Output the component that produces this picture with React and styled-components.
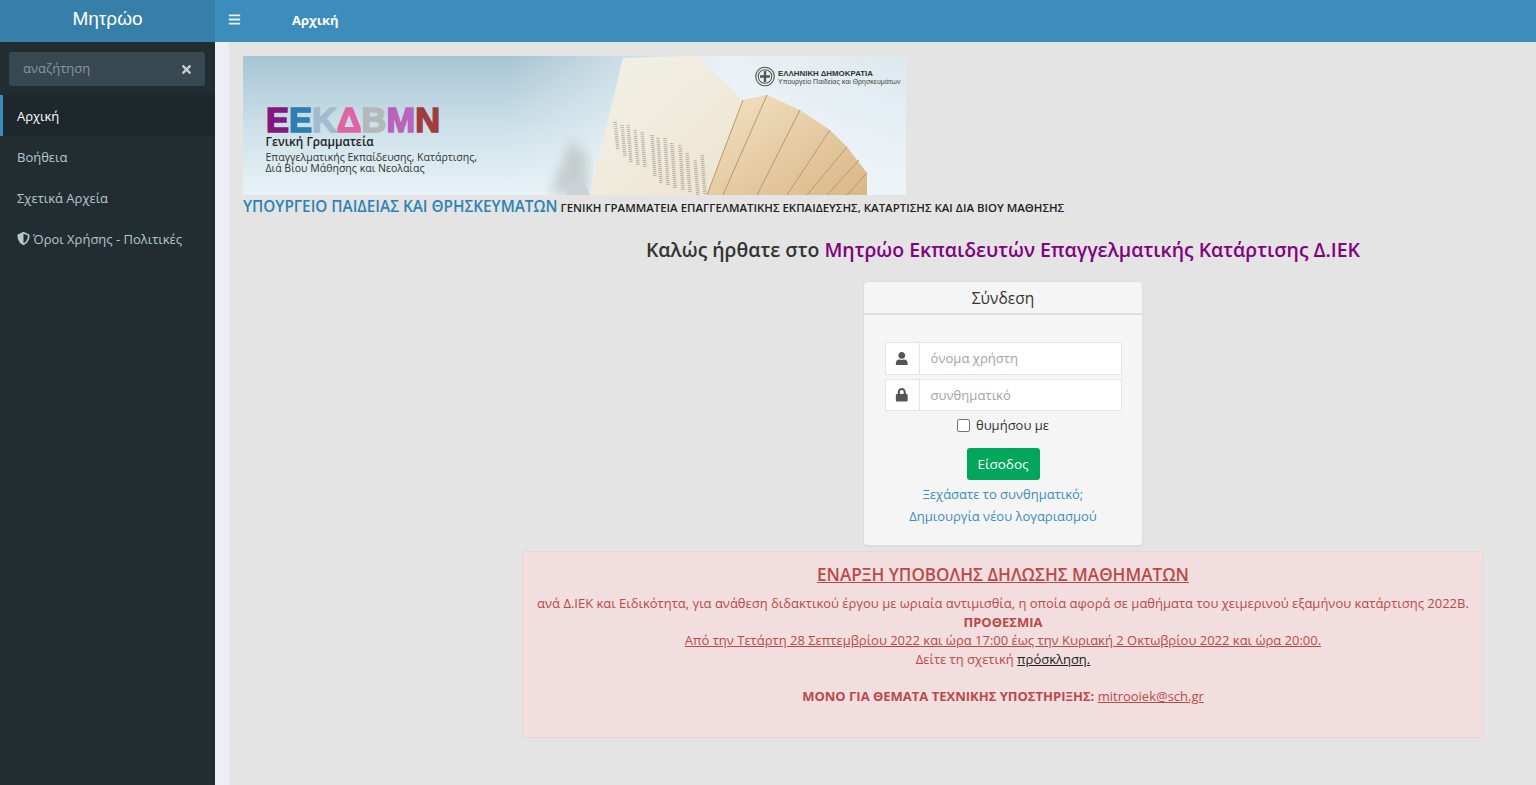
import React from 'react';
import styled, {createGlobalStyle} from 'styled-components';
import {FaBars, FaUser, FaLock, FaTimes, FaShieldAlt} from 'react-icons/fa';

const GlobalStyle = createGlobalStyle`
  html, body {
    margin: 0;
    height: 100%;
    overflow: hidden;
  }
  body {
    background: #e4e4e4;
    color: #333;
    font-family: "Open Sans", "Noto Sans", sans-serif;
    font-size: 14px;
  }
  * {
    box-sizing: border-box;
  }
`;

const Page = styled.div`
  display: flex;
  width: 1536px;
  height: 785px;
  overflow: hidden;
`;

const Sidebar = styled.aside`
  flex: 0 0 215px;
  display: flex;
  flex-direction: column;
  background: #222d32;
`;
const Brand = styled.div`
  height: 42px;
  display: flex;
  justify-content: center;
  align-items: center;
  padding-bottom: 4px;
  background: #367fa9;
  color: #fff;
  font-family: "Liberation Sans", Arial, sans-serif;
  font-size: 19px;
`;
const SearchWrap = styled.div`
  height: 53px;
  padding: 10px 10px 9px 9px;
`;
const SearchBox = styled.div`
  height: 34px;
  display: flex;
  justify-content: space-between;
  align-items: center;
  padding: 0 12px 2px 14px;
  border-radius: 3px;
  background: #374850;
  color: #87969d;
  font-size: 13px;
  & svg {
    color: #c4cdd1;
    font-size: 13px;
    margin-top: 2px;
  }
`;
const MenuItem = styled.div`
  height: 41px;
  display: flex;
  align-items: center;
  gap: 3px;
  padding-left: ${props => props.active ? 14 : 17}px;
  border-left: ${props => props.active ? '3px solid #3c8dbc' : 'none'};
  background: ${props => props.active ? '#1e282c' : 'transparent'};
  color: ${props => props.active ? '#fff' : '#b8c7ce'};
  font-size: 13px;
  & svg {
    font-size: 13px;
  }
`;

const Main = styled.div`
  flex: 1;
  display: flex;
  flex-direction: column;
  min-width: 0;
`;
const Navbar = styled.header`
  height: 42px;
  flex: 0 0 42px;
  display: flex;
  align-items: center;
  padding-left: 13px;
  background: #3c8dbc;
  color: #fff;
  & svg {
    font-size: 13px;
    margin-bottom: 3px;
    color: #e8f1f6;
  }
`;
const NavTitle = styled.div`
  margin-left: 51px;
  margin-bottom: 3px;
  font-size: 13px;
  font-weight: 700;
`;
const Content = styled.main`
  flex: 1;
  padding: 14px 52px 0 14px;
  border-left: 14px solid #ecf0f5;
  background: #e4e4e4;
`;

const Banner = styled.svg`
  display: block;
  width: 663px;
  height: 139px;
`;
const TitleLine = styled.div`
  height: 22px;
  padding-top: 1px;
  display: flex;
  align-items: baseline;
  gap: 3px;
  white-space: nowrap;
`;
const Ministry = styled.span`
  color: #2c83b5;
  font-size: 15.3px;
  font-weight: 600;
`;
const Secretariat = styled.span`
  color: #222;
  font-size: 11.45px;
  font-weight: 600;
`;
const Column = styled.div`
  margin-left: 279px;
  display: flex;
  flex-direction: column;
  align-items: center;
`;
const Welcome = styled.h3`
  margin: 20px 0 19px;
  color: #333;
  font-size: 19.45px;
  line-height: 25px;
  font-weight: 600;
  white-space: nowrap;
  & span {
    color: #800080;
  }
`;
const Panel = styled.section`
  width: 280px;
  height: 265px;
  margin-bottom: 5px;
  border: 1px solid #ddd;
  border-radius: 4px;
  background: #f5f5f5;
  box-shadow: 0 1px 1px rgba(0,0,0,.05);
`;
const PanelHead = styled.div`
  height: 33px;
  display: flex;
  justify-content: center;
  align-items: center;
  border-bottom: 2px solid #ddd;
  color: #333;
  font-size: 15.5px;
`;
const PanelBody = styled.div`
  display: flex;
  flex-direction: column;
  align-items: center;
  padding: 27px 20px 0;
`;
const InputRow = styled.div`
  width: 237px;
  height: ${props => props.second ? 32 : 33}px;
  margin-bottom: ${props => props.second ? 0 : 4}px;
  display: flex;
  border: 1px solid #e2e5ea;
  background: #fff;
`;
const Addon = styled.div`
  flex: 0 0 34px;
  display: flex;
  justify-content: center;
  align-items: center;
  border-right: 1px solid #e2e5ea;
  color: #555;
  font-size: 13.5px;
`;
const Placeholder = styled.div`
  flex: 1;
  display: flex;
  align-items: center;
  padding-left: 11px;
  padding-bottom: 1px;
  color: #a3a3a3;
  font-size: 13.1px;
`;
const RememberRow = styled.label`
  height: 28px;
  display: flex;
  align-items: center;
  gap: 6px;
  color: #333;
  font-size: 13px;
`;
const CheckBox = styled.span`
  width: 13px;
  height: 13px;
  border: 1.5px solid #767676;
  border-radius: 2px;
  background: #fff;
`;
const LoginButton = styled.div`
  width: 73px;
  height: 32px;
  margin: 9px 0 3px;
  display: flex;
  justify-content: center;
  align-items: center;
  border-radius: 3px;
  background: #00a65a;
  color: #fff;
  font-size: 13.5px;
`;
const PanelLink = styled.a`
  height: 22px;
  display: flex;
  align-items: center;
  color: #3c8dbc;
  font-size: 13px;
  white-space: nowrap;
`;

const Alert = styled.section`
  width: 962px;
  height: 187px;
  padding: 11px 0 0;
  border: 1px solid #eed3d6;
  border-radius: 3px;
  background: #f2dede;
  color: #b94a48;
  text-align: center;
  font-size: 13px;
  line-height: 18.6px;
`;
const AlertTitle = styled.h4`
  margin: 0 0 7px;
  font-size: 17.1px;
  line-height: 24px;
  font-weight: 600;
  text-decoration: underline;
`;
const AlertLine = styled.div`
  min-height: 18.6px;
  white-space: nowrap;
  font-weight: ${props => props.bold ? 700 : 400};
  text-decoration: ${props => props.under ? 'underline' : 'none'};
`;
const DarkLink = styled.a`
  color: #222;
  text-decoration: underline;
`;
const MailLink = styled.a`
  color: #b94a48;
  font-weight: 400;
  text-decoration: underline;
`;

const logoLetters = [
    ['Ε', '#84177f'], ['Ε', '#2c7fb0'], ['Κ', '#a3bccd'], ['Δ', '#df64a3'],
    ['Β', '#b4b8bb'], ['Μ', '#b963bd'], ['Ν', '#a13c3e'],
];
const printColumns = [
    [372, 66, 94], [379, 69, 101], [385, 69, 107], [392, 74, 109], [399, 76, 111], [409, 79, 121], [415, 82, 127],
    [422, 82, 129], [429, 87, 132], [437, 89, 134], [444, 97, 137], [452, 104, 139], [459, 99, 139],
];
const pageFolds = [
    [464, 139, 500, 44], [480, 139, 524, 39], [514, 139, 557, 54], [544, 139, 587, 74],
    [564, 139, 604, 91], [584, 139, 616, 104], [604, 139, 624, 117],
];

const BannerPicture = () => (
    <Banner viewBox="0 0 663 139">
        <defs>
            <linearGradient id="sky" x1="0" y1="0" x2="0" y2="1">
                <stop offset="0" stopColor="#a7c5d3"/>
                <stop offset="0.55" stopColor="#cfe2ea"/>
                <stop offset="1" stopColor="#e8f3f7"/>
            </linearGradient>
            <linearGradient id="skyFade" x1="0" y1="0" x2="1" y2="0">
                <stop offset="0.4" stopColor="#f1f6f9" stopOpacity="0"/>
                <stop offset="0.72" stopColor="#f1f6f9" stopOpacity="0.9"/>
                <stop offset="1" stopColor="#eef4f8" stopOpacity="0.75"/>
            </linearGradient>
            <linearGradient id="paper" x1="0" y1="0" x2="1" y2="1">
                <stop offset="0" stopColor="#f1f1e8"/>
                <stop offset="1" stopColor="#eee4cf"/>
            </linearGradient>
            <linearGradient id="fan" x1="0" y1="0" x2="1" y2="1">
                <stop offset="0" stopColor="#f3e2c4"/>
                <stop offset="1" stopColor="#d9b786"/>
            </linearGradient>
            <filter id="soft"><feGaussianBlur stdDeviation="0.5"/></filter>
            <filter id="streak"><feGaussianBlur stdDeviation="6"/></filter>
        </defs>
        <rect width="663" height="139" fill="url(#sky)"/>
        <rect width="663" height="139" fill="url(#skyFade)"/>
        <polygon points="306,139 328,84 344,100 346,139" fill="#8d9089" opacity="0.35" filter="url(#streak)"/>
        <g filter="url(#soft)">
            <polygon points="380,2 454,0 500,44 464,139 347,139" fill="url(#paper)"/>
            <polygon points="500,44 524,39 557,54 587,74 604,91 624,117 624,139 464,139" fill="url(#fan)"/>
            <polygon points="337,118 347,139 322,139" fill="#c9d3d6"/>
            {pageFolds.map(([x1, y1, x2, y2]) => (
                <line key={x2} x1={x1} y1={y1} x2={x2} y2={y2} stroke="#b8976a" strokeWidth="1"/>
            ))}
            {printColumns.map(([x, y1, y2]) => (
                <line key={x} x1={x} y1={y1} x2={x + 3} y2={y2} stroke="#77746d" strokeWidth="3.5"
                      strokeDasharray="0.7 1.3" opacity="0.65"/>
            ))}
        </g>
        <text x="23" y="75.5" fontFamily="'Liberation Sans', sans-serif" fontSize="35" fontWeight="700"
              textLength="174" lengthAdjust="spacingAndGlyphs">
            {logoLetters.map(([letter, colour], i) => (
                <tspan key={i} fill={colour} stroke={colour} strokeWidth="1.6">{letter}</tspan>
            ))}
        </text>
        <text x="22.5" y="90" fontFamily="'Open Sans', sans-serif" fontSize="11.8" fontWeight="600" fill="#222">Γενική Γραμματεία</text>
        <text x="22.5" y="105" fontFamily="'Open Sans', sans-serif" fontSize="10.55" fill="#333">Επαγγελματικής Εκπαίδευσης, Κατάρτισης,</text>
        <text x="22.5" y="116" fontFamily="'Open Sans', sans-serif" fontSize="10.55" fill="#333">Διά Βίου Μάθησης και Νεολαίας</text>
        <g fill="none" stroke="#555" strokeWidth="1.1">
            <circle cx="522" cy="20.5" r="9.3"/>
            <circle cx="522" cy="20.5" r="6.8"/>
            <path d="M522 15v11M517 20.5h10" strokeWidth="2.4"/>
        </g>
        <text x="535" y="19.5" fontFamily="'Liberation Sans', sans-serif" fontSize="7.9" fontWeight="700" fill="#333">ΕΛΛΗΝΙΚΗ ΔΗΜΟΚΡΑΤΙΑ</text>
        <text x="535" y="28" fontFamily="'Liberation Sans', sans-serif" fontSize="7" fill="#444">Υπουργείο Παιδείας και Θρησκευμάτων</text>
    </Banner>
);

const App = () => {
    return (
        <Page>
            <GlobalStyle/>
            <Sidebar>
                <Brand>Μητρώο</Brand>
                <SearchWrap>
                    <SearchBox>αναζήτηση<FaTimes/></SearchBox>
                </SearchWrap>
                <MenuItem active>Αρχική</MenuItem>
                <MenuItem>Βοήθεια</MenuItem>
                <MenuItem>Σχετικά Αρχεία</MenuItem>
                <MenuItem><FaShieldAlt/>Όροι Χρήσης - Πολιτικές</MenuItem>
            </Sidebar>
            <Main>
                <Navbar>
                    <FaBars/>
                    <NavTitle>Αρχική</NavTitle>
                </Navbar>
                <Content>
                    <BannerPicture/>
                    <TitleLine>
                        <Ministry>ΥΠΟΥΡΓΕΙΟ ΠΑΙΔΕΙΑΣ ΚΑΙ ΘΡΗΣΚΕΥΜΑΤΩΝ</Ministry>
                        <Secretariat>ΓΕΝΙΚΗ ΓΡΑΜΜΑΤΕΙΑ ΕΠΑΓΓΕΛΜΑΤΙΚΗΣ ΕΚΠΑΙΔΕΥΣΗΣ, ΚΑΤΑΡΤΙΣΗΣ ΚΑΙ ΔΙΑ ΒΙΟΥ ΜΑΘΗΣΗΣ</Secretariat>
                    </TitleLine>
                    <Column>
                        <Welcome>Καλώς ήρθατε στο <span>Μητρώο Εκπαιδευτών Επαγγελματικής Κατάρτισης Δ.ΙΕΚ</span></Welcome>
                        <Panel>
                            <PanelHead>Σύνδεση</PanelHead>
                            <PanelBody>
                                <InputRow>
                                    <Addon><FaUser/></Addon>
                                    <Placeholder>όνομα χρήστη</Placeholder>
                                </InputRow>
                                <InputRow second>
                                    <Addon><FaLock/></Addon>
                                    <Placeholder>συνθηματικό</Placeholder>
                                </InputRow>
                                <RememberRow><CheckBox/>θυμήσου με</RememberRow>
                                <LoginButton>Είσοδος</LoginButton>
                                <PanelLink>Ξεχάσατε το συνθηματικό;</PanelLink>
                                <PanelLink>Δημιουργία νέου λογαριασμού</PanelLink>
                            </PanelBody>
                        </Panel>
                        <Alert>
                            <AlertTitle>ΕΝΑΡΞΗ ΥΠΟΒΟΛΗΣ ΔΗΛΩΣΗΣ ΜΑΘΗΜΑΤΩΝ</AlertTitle>
                            <AlertLine>ανά Δ.ΙΕΚ και Ειδικότητα, για ανάθεση διδακτικού έργου με ωριαία αντιμισθία, η οποία αφορά σε μαθήματα του χειμερινού εξαμήνου κατάρτισης 2022Β.</AlertLine>
                            <AlertLine bold>ΠΡΟΘΕΣΜΙΑ</AlertLine>
                            <AlertLine under>Από την Τετάρτη 28 Σεπτεμβρίου 2022 και ώρα 17:00 έως την Κυριακή 2 Οκτωβρίου 2022 και ώρα 20:00.</AlertLine>
                            <AlertLine>Δείτε τη σχετική <DarkLink>πρόσκληση.</DarkLink></AlertLine>
                            <AlertLine/>
                            <AlertLine bold>ΜΟΝΟ ΓΙΑ ΘΕΜΑΤΑ ΤΕΧΝΙΚΗΣ ΥΠΟΣΤΗΡΙΞΗΣ: <MailLink>mitrooiek@sch.gr</MailLink></AlertLine>
                        </Alert>
                    </Column>
                </Content>
            </Main>
        </Page>
    );
};

export default App;
